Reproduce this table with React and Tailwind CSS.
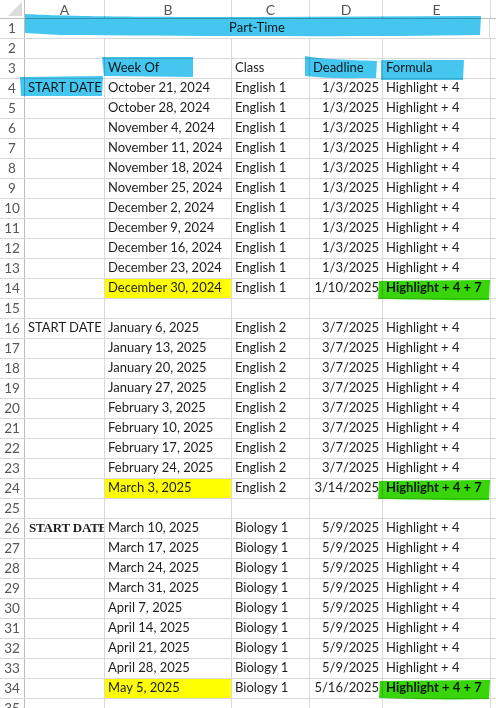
import React from "react";

const cols = [
  { key: "A", w: "w-[80px]" },
  { key: "B", w: "w-[127px]" },
  { key: "C", w: "w-[78px]" },
  { key: "D", w: "w-[73px]" },
  { key: "E", w: "w-[108px]" },
  { key: "F", w: "w-[40px]" },
];

const block = (weeks, cls, deadline, last, lastDeadline, bold) => {
  const rows = weeks.map((wk, i) => ({
    a: i === 0 ? "START DATE" : "",
    aBold: i === 0 && bold,
    b: wk,
    c: cls,
    d: deadline,
    e: "Highlight + 4",
  }));
  rows.push({ b: last, yellow: true, c: cls, d: lastDeadline, e: "Highlight + 4 + 7", green: true });
  return rows;
};

const english1 = block(
  [
    "October 21, 2024",
    "October 28, 2024",
    "November 4, 2024",
    "November 11, 2024",
    "November 18, 2024",
    "November 25, 2024",
    "December 2, 2024",
    "December 9, 2024",
    "December 16, 2024",
    "December 23, 2024",
  ],
  "English 1",
  "1/3/2025",
  "December 30, 2024",
  "1/10/2025"
);

const english2 = block(
  [
    "January 6, 2025",
    "January 13, 2025",
    "January 20, 2025",
    "January 27, 2025",
    "February 3, 2025",
    "February 10, 2025",
    "February 17, 2025",
    "February 24, 2025",
  ],
  "English 2",
  "3/7/2025",
  "March 3, 2025",
  "3/14/2025"
);

const biology = block(
  [
    "March 10, 2025",
    "March 17, 2025",
    "March 24, 2025",
    "March 31, 2025",
    "April 7, 2025",
    "April 14, 2025",
    "April 21, 2025",
    "April 28, 2025",
  ],
  "Biology 1",
  "5/9/2025",
  "May 5, 2025",
  "5/16/2025",
  true
);

const rows = [
  { title: true },
  {},
  { b: "Week Of", c: "Class", d: "Deadline", dLeft: true, e: "Formula" },
  ...english1,
  {},
  ...english2,
  {},
  ...biology,
  {},
];

const Cell = ({ w, children, className = "" }) => (
  <div
    className={`${w} h-full shrink-0 border-r border-[#d9d9d9] flex items-end pb-[1px] px-[3px] overflow-hidden whitespace-nowrap ${className}`}
  >
    {children}
  </div>
);

const Row = ({ n, r }) => (
  <div className="flex h-[20px] border-b border-[#d9d9d9]">
    <div className="w-[25px] shrink-0 h-full border-r border-[#bdbdbd] flex items-center justify-center text-[#555] text-[13.5px]">
      {n}
    </div>
    {r.title ? (
      <div className="w-[465px] shrink-0 h-full border-r border-[#d9d9d9] flex items-end pb-[1px] justify-center">
        Part-Time
      </div>
    ) : (
      <>
        <Cell
          w="w-[80px]"
          className={r.aBold ? "font-['Liberation_Serif',serif] font-bold text-[13px] tracking-[-0.2px] pl-[4px]" : ""}
        >
          {r.a}
        </Cell>
        <Cell w="w-[127px]" className={r.yellow ? "bg-[#ffff00]" : ""}>
          {r.b}
        </Cell>
        <Cell w="w-[78px]">{r.c}</Cell>
        <Cell w="w-[73px]" className={r.dLeft ? "" : "justify-end"}>
          {r.d}
        </Cell>
        <Cell w="w-[108px]" className={r.green ? "font-bold" : ""}>
          {r.e}
        </Cell>
      </>
    )}
    <Cell w="w-[40px]" />
  </div>
);

const Marks = () => (
  <div className="pointer-events-none absolute inset-0 mix-blend-multiply">
    <svg width="496" height="708" className="absolute left-0 top-0">
      <g fill="#45c6ef">
        <path d="M25 14 C60 16 120 17 240 17 L481 16 L480 35 C360 37 200 36 60 35 L25 33 Z" />
        <path d="M102 57 L193 57 L193 77 L104 76 Z" />
        <path d="M20 77 L103 76 L102 96 L21 96 Z" />
        <path d="M305 56 C320 59 350 60 377 61 L376 78 C350 78 330 79 305 76 Z" />
        <path d="M381 60 L464 60 L463 80 L381 80 Z" />
      </g>
      <g fill="#37d50a">
        <path d="M379 281 L490 280 L489 300 C450 301 410 299 378 299 Z" />
        <path d="M379 481 L490 480 L489 500 C450 501 410 499 378 499 Z" />
        <path d="M380 681 L490 680 L489 699 C450 700 410 699 379 698 Z" />
      </g>
    </svg>
  </div>
);

export default function App() {
  return (
    <div className="relative w-[496px] h-[708px] overflow-hidden bg-white font-['Lato',Arial,sans-serif] text-[13px] text-[#1e1e1e]">
      <div className="flex h-[19px] border-b border-[#bdbdbd] bg-white text-[14px]">
        <div className="w-[25px] shrink-0 h-full border-r border-[#bdbdbd] relative">
          <div className="absolute right-[2px] bottom-[2px] w-0 h-0 border-l-[14px] border-l-transparent border-b-[14px] border-b-[#dcdcdc]" />
        </div>
        {cols.map((c) => (
          <div
            key={c.key}
            className={`${c.w} shrink-0 h-full border-r border-[#d9d9d9] flex items-center justify-center text-[#555]`}
          >
            {c.key === "F" ? "" : c.key}
          </div>
        ))}
      </div>
      {rows.map((r, i) => (
        <Row key={i} n={i + 1} r={r} />
      ))}
      <Marks />
    </div>
  );
}
